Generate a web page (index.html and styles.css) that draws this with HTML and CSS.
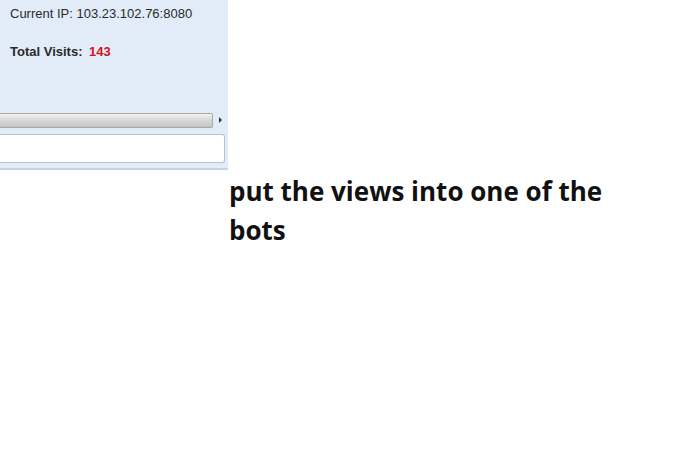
FILE: index.html
```html
<!DOCTYPE html>
<html lang="en">
<head>
    <meta charset="UTF-8">
    <title>Visits</title>
    <link rel="stylesheet" href="styles.css">
</head>
<body>
    <div class="page">
        <div class="panel">
            <div class="info">
                <p class="ip">Current IP: 103.23.102.76:8080</p>
                <p class="visits">Total Visits: <span class="count">143</span></p>
            </div>
            <div class="scrollbar">
                <div class="track"></div>
                <div class="arrow"></div>
            </div>
            <div class="box"></div>
        </div>
        <h1 class="note">put the views into one of the bots</h1>
    </div>
</body>
</html>
```

FILE: styles.css
```css
* {
    margin: 0;
    padding: 0;
    box-sizing: border-box;
}

body {
    background: white;
    font-family: "Liberation Sans", Arial, sans-serif;
}

.page {
    display: flex;
    align-items: flex-start;
}

.panel {
    width: 228px;
    height: 170px;
    background: #e2ecf8;
    border-bottom: 2px solid #c3d3e6;
    flex-shrink: 0;
}

.info {
    padding: 6px 0 0 10px;
    height: 113px;
    color: #2a2a2a;
    font-size: 13px;
}

.ip {
    margin-bottom: 23px;
}

.visits {
    font-weight: bold;
}

.count {
    color: #d0141a;
    margin-left: 3px;
}

.scrollbar {
    display: flex;
    height: 15px;
}

.track {
    width: 213px;
    border: 1px solid #a8a8a8;
    border-left: none;
    border-radius: 0 2px 2px 0;
    background: linear-gradient(#f2f2f2, #d6d6d6 50%, #c4c4c4);
}

.arrow {
    flex: 1;
    position: relative;
}

.arrow::after {
    content: "";
    position: absolute;
    left: 6px;
    top: 4px;
    border-left: 3px solid #333;
    border-top: 3px solid transparent;
    border-bottom: 3px solid transparent;
}

.box {
    margin-top: 6px;
    width: 225px;
    height: 29px;
    background: white;
    border: 1px solid #b9c2cc;
    border-left: none;
    border-radius: 0 3px 3px 0;
}

.note {
    width: 420px;
    margin: 172px 0 0 1px;
    font-family: "Open Sans", sans-serif;
    font-size: 26px;
    line-height: 39px;
    font-weight: bold;
    color: #111;
}
```
